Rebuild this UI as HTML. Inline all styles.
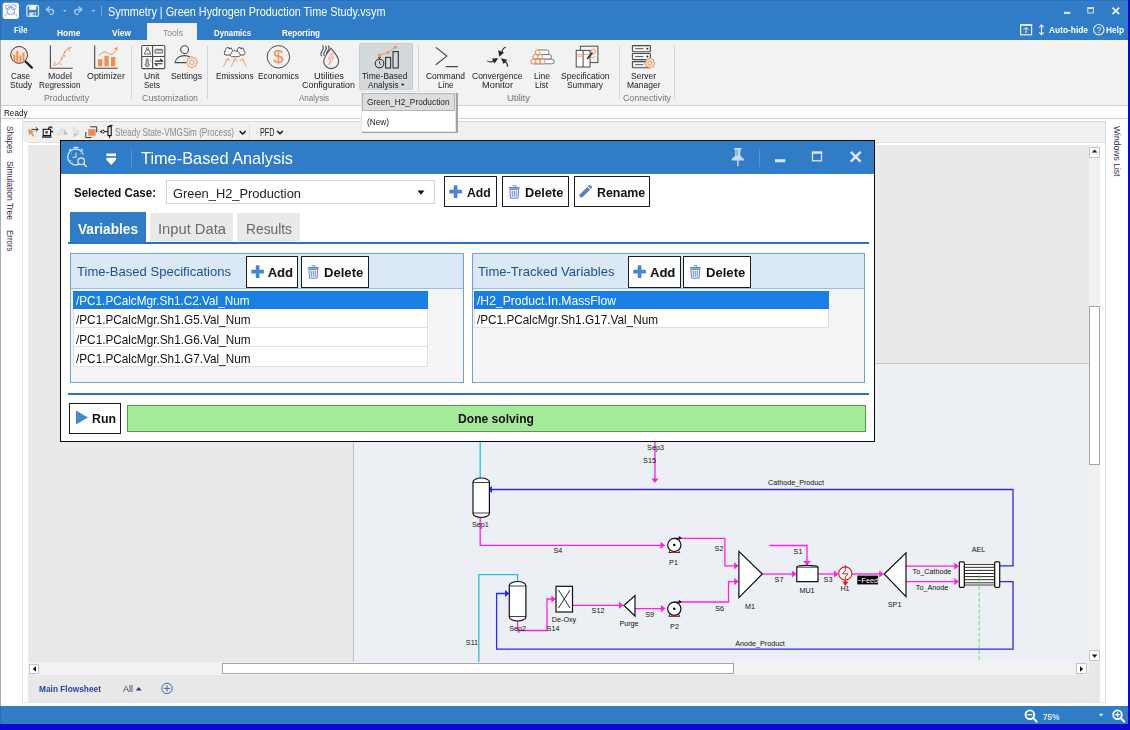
<!DOCTYPE html>
<html lang="en"><head><meta charset="utf-8"><title>Symmetry | Green Hydrogen Production Time Study.vsym</title>
<style>
html,body{margin:0;padding:0;}
body{width:1130px;height:730px;position:relative;overflow:hidden;background:#fff;font-family:'Liberation Sans', sans-serif;}
.b{position:absolute;box-sizing:border-box;display:block;}
.t{position:absolute;white-space:nowrap;line-height:1;transform-origin:0 50%;}
svg text{font-family:'Liberation Sans', sans-serif;}
</style></head>
<body>
<div class="b" style="left:0px;top:0px;width:1130px;height:730px;background:#ffffff;"></div>
<div class="b" style="left:0px;top:0px;width:1128px;height:40px;background:#307cc7;"></div>
<div class="b" style="left:0px;top:0px;width:1128px;height:1px;background:#2b70b8;"></div>
<div class="b" style="left:0px;top:40px;width:1128px;height:66px;background:#f2f2f2;"></div>
<div class="b" style="left:0px;top:104.8px;width:1128px;height:1px;background:#cdd2d8;"></div>
<div class="b" style="left:0px;top:106px;width:1128px;height:12px;background:#ffffff;"></div>
<div class="b" style="left:0px;top:117.7px;width:1128px;height:1px;background:#cdd2d9;"></div>
<div class="b" style="left:147px;top:22.6px;width:50px;height:17.4px;background:#f2f2f2;"></div>
<span class="t" style="left:14.00px;top:25.01px;font-size:9.6px;color:#fff;font-weight:700;transform:scaleX(0.8166);">File</span>
<span class="t" style="left:57.00px;top:27.81px;font-size:9.6px;color:#fff;font-weight:700;transform:scaleX(0.8816);">Home</span>
<span class="t" style="left:112.00px;top:27.81px;font-size:9.6px;color:#fff;font-weight:700;transform:scaleX(0.8754);">View</span>
<span class="t" style="left:162.50px;top:27.81px;font-size:9.6px;color:#7f8aa3;transform:scaleX(0.8926);">Tools</span>
<span class="t" style="left:214.00px;top:27.81px;font-size:9.6px;color:#fff;font-weight:700;transform:scaleX(0.8163);">Dynamics</span>
<span class="t" style="left:282.00px;top:27.81px;font-size:9.6px;color:#fff;font-weight:700;transform:scaleX(0.8386);">Reporting</span>
<span class="t" style="left:107.50px;top:6.04px;font-size:12.4px;color:#fff;transform:scaleX(0.8754);">Symmetry | Green Hydrogen Production Time Study.vsym</span>
<span class="t" style="left:1049.00px;top:24.81px;font-size:9.6px;color:#fff;font-weight:700;transform:scaleX(0.8712);">Auto-hide</span>
<span class="t" style="left:1106.00px;top:24.81px;font-size:9.6px;color:#fff;font-weight:700;transform:scaleX(0.8655);">Help</span>
<svg class="b" style="left:0px;top:0px;" width="1128" height="40" viewBox="0 0 1128 40"><rect x="2.7" y="2.7" width="16.2" height="16.2" rx="2.6" fill="#fff"/><g fill="none" stroke="#8d99cf" stroke-width="0.9"><circle cx="7.7" cy="7.4" r="2.3"/><circle cx="13.6" cy="7.2" r="2.5"/><circle cx="10.7" cy="10.8" r="3.9"/><path d="M5 15.9c0.4 -2.3 2.3 -3.3 4 -2.6M16.5 15.9c-0.4 -2.3 -2.3 -3.3 -4 -2.6"/></g><rect x="26.9" y="5.5" width="11.6" height="10.8" rx="1.6" fill="none" stroke="#d3e4f8" stroke-width="1.3"/><rect x="29.2" y="5.5" width="7" height="4.3" fill="#fff"/><rect x="29.4" y="12.4" width="6.6" height="3.6" fill="#d3e4f8"/><rect x="33.2" y="13.4" width="2" height="1.8" fill="#307cc7"/><path d="M49.8 6.6L46.3 9.5L49.8 12.4M46.6 9.5H51.2A2.4 2.4 0 0 1 51.2 14.3H49.6" fill="none" stroke="#a9cbf0" stroke-width="1.3"/><path d="M78.4 6.6L81.9 9.5L78.4 12.4M81.6 9.5H77A2.4 2.4 0 0 0 77 14.3H78.6" fill="none" stroke="#a9cbf0" stroke-width="1.3"/><path d="M63 10h3.4l-1.7 2z M91.8 10h3.4l-1.7 2z" fill="#a9cbf0"/><rect x="101" y="5.8" width="1" height="10.4" fill="#6ea4dc"/><rect x="1064" y="11.8" width="6.4" height="2.2" fill="#d3e4f8"/><rect x="1087.8" y="7.8" width="5.6" height="5.2" fill="none" stroke="#d3e4f8" stroke-width="1"/><rect x="1087.3" y="7.2" width="6.6" height="1.8" fill="#d3e4f8"/><path d="M1112.5 7.6l6.6 6.6M1119.1 7.6l-6.6 6.6" stroke="#f0f6fd" stroke-width="1.7"/><rect x="1020.6" y="25" width="11" height="9.8" fill="none" stroke="#eaf2fc" stroke-width="1.2"/><rect x="1020" y="24.2" width="12.2" height="1.6" fill="#eaf2fc"/><path d="M1026.1 33v-5.4M1023.6 29.8l2.5 -2.5l2.5 2.5" fill="none" stroke="#eaf2fc" stroke-width="1"/><path d="M1041.5 25v9.6M1039.3 27.3l2.2 -2.4l2.2 2.4M1039.3 32.3l2.2 2.4l2.2 -2.4" fill="none" stroke="#eaf2fc" stroke-width="1.1"/><circle cx="1098.8" cy="29.7" r="5.2" fill="none" stroke="#eaf2fc" stroke-width="1.1"/><text x="1098.8" y="32.7" font-size="8.4" text-anchor="middle" fill="#eaf2fc">?</text></svg>
<div class="b" style="left:359px;top:43.2px;width:54.4px;height:46.6px;background:#d4d9dc;border:1px solid #c6cdd2;border-radius:2px;"></div>
<span class="t" style="left:11.00px;top:71.31px;font-size:9.4px;color:#222;transform:scaleX(0.8680);">Case</span>
<span class="t" style="left:9.50px;top:80.31px;font-size:9.4px;color:#222;transform:scaleX(0.9173);">Study</span>
<span class="t" style="left:48.00px;top:71.31px;font-size:9.4px;color:#222;transform:scaleX(0.9394);">Model</span>
<span class="t" style="left:39.25px;top:80.31px;font-size:9.4px;color:#222;transform:scaleX(0.8751);">Regression</span>
<span class="t" style="left:87.00px;top:71.31px;font-size:9.4px;color:#222;transform:scaleX(0.9474);">Optimizer</span>
<span class="t" style="left:144.25px;top:71.31px;font-size:9.4px;color:#222;transform:scaleX(0.9297);">Unit</span>
<span class="t" style="left:144.00px;top:80.31px;font-size:9.4px;color:#222;transform:scaleX(0.8526);">Sets</span>
<span class="t" style="left:170.50px;top:71.31px;font-size:9.4px;color:#222;transform:scaleX(0.9151);">Settings</span>
<span class="t" style="left:216.25px;top:71.31px;font-size:9.4px;color:#222;transform:scaleX(0.8778);">Emissions</span>
<span class="t" style="left:257.50px;top:71.31px;font-size:9.4px;color:#222;transform:scaleX(0.8940);">Economics</span>
<span class="t" style="left:313.50px;top:71.31px;font-size:9.4px;color:#222;transform:scaleX(0.9928);">Utilities</span>
<span class="t" style="left:302.00px;top:80.31px;font-size:9.4px;color:#222;transform:scaleX(0.9504);">Configuration</span>
<span class="t" style="left:362.25px;top:71.41px;font-size:9.4px;color:#222;transform:scaleX(0.9063);">Time-Based</span>
<span class="t" style="left:367.75px;top:80.31px;font-size:9.4px;color:#222;transform:scaleX(0.8734);">Analysis</span>
<span class="t" style="left:426.30px;top:71.31px;font-size:9.4px;color:#222;transform:scaleX(0.9017);">Command</span>
<span class="t" style="left:438.05px;top:80.31px;font-size:9.4px;color:#222;transform:scaleX(0.8740);">Line</span>
<span class="t" style="left:472.25px;top:71.31px;font-size:9.4px;color:#222;transform:scaleX(0.9056);">Convergence</span>
<span class="t" style="left:482.00px;top:80.31px;font-size:9.4px;color:#222;transform:scaleX(0.9915);">Monitor</span>
<span class="t" style="left:533.50px;top:71.31px;font-size:9.4px;color:#222;transform:scaleX(0.9022);">Line</span>
<span class="t" style="left:535.00px;top:80.31px;font-size:9.4px;color:#222;transform:scaleX(0.8908);">List</span>
<span class="t" style="left:560.75px;top:71.31px;font-size:9.4px;color:#222;transform:scaleX(0.9124);">Specification</span>
<span class="t" style="left:567.00px;top:80.31px;font-size:9.4px;color:#222;transform:scaleX(0.8975);">Summary</span>
<span class="t" style="left:631.00px;top:71.31px;font-size:9.4px;color:#222;transform:scaleX(0.9050);">Server</span>
<span class="t" style="left:626.75px;top:80.31px;font-size:9.4px;color:#222;transform:scaleX(0.9050);">Manager</span>
<span class="t" style="left:43.50px;top:93.41px;font-size:9.4px;color:#70757b;transform:scaleX(0.9284);">Productivity</span>
<span class="t" style="left:142.00px;top:93.41px;font-size:9.4px;color:#70757b;transform:scaleX(0.9427);">Customization</span>
<span class="t" style="left:298.50px;top:93.41px;font-size:9.4px;color:#70757b;transform:scaleX(0.8591);">Analysis</span>
<span class="t" style="left:507.00px;top:93.41px;font-size:9.4px;color:#70757b;">Utility</span>
<span class="t" style="left:623.00px;top:93.41px;font-size:9.4px;color:#70757b;transform:scaleX(0.9397);">Connectivity</span>
<div class="b" style="left:131px;top:46px;width:1px;height:53px;background:#d0d4d9;"></div>
<div class="b" style="left:207px;top:46px;width:1px;height:53px;background:#d0d4d9;"></div>
<div class="b" style="left:417.5px;top:46px;width:1px;height:53px;background:#d0d4d9;"></div>
<div class="b" style="left:618.5px;top:46px;width:1px;height:53px;background:#d0d4d9;"></div>
<div class="b" style="left:673.5px;top:46px;width:1px;height:53px;background:#d0d4d9;"></div>
<svg class="b" style="left:0px;top:40px;" width="1128" height="66" viewBox="0 40 1128 66"><path d="M25.5 61.5L31.8 67.6" stroke="#222" stroke-width="2.4" stroke-linecap="round"/><circle cx="19.1" cy="54.9" r="8.4" fill="#fce9df" stroke="#4a3328" stroke-width="1"/><rect x="13.4" y="54.5" width="1.9" height="6.799999999999997" fill="#f28c55"/><rect x="16.3" y="50.8" width="1.9" height="11.5" fill="#f28c55"/><rect x="19.5" y="55.5" width="1.9" height="6.799999999999997" fill="#f28c55"/><rect x="22.6" y="52.6" width="1.9" height="8.699999999999996" fill="#f28c55"/><path d="M50.4 45.4V68.3H72.8" fill="none" stroke="#4a4a4a" stroke-width="1.1"/><path d="M53 65.3C60 64.6 61.5 60 63 56C64.5 51.5 67 48.4 71.6 47.3" fill="none" stroke="#f28c55" stroke-width="1"/><circle cx="54.8" cy="62.8" r="0.85" fill="#f28c55"/><circle cx="60.9" cy="64" r="0.85" fill="#f28c55"/><circle cx="61.5" cy="58.2" r="0.85" fill="#f28c55"/><circle cx="64.6" cy="52" r="0.85" fill="#f28c55"/><circle cx="64.5" cy="55.8" r="0.85" fill="#f28c55"/><circle cx="69.3" cy="50.3" r="0.85" fill="#f28c55"/><circle cx="68.8" cy="48" r="0.85" fill="#f28c55"/><path d="M94.7 45.4V68.3H117.8" fill="none" stroke="#4a4a4a" stroke-width="1.1"/><rect x="98" y="59.3" width="4.3" height="7.1000000000000085" fill="#f28c55"/><rect x="104.4" y="55.8" width="4.3" height="10.600000000000009" fill="#f28c55"/><rect x="111" y="57" width="4.3" height="9.400000000000006" fill="#f28c55"/><path d="M99 55.5C102 52.5 104.5 51.3 106.5 52.2C108.8 53.3 110 55 112 54.2C114 53.4 115.5 50.8 116.6 48.6" fill="none" stroke="#f28c55" stroke-width="1"/><path d="M117.7 46.9l-3.6 1.4 2.9 2.2z" fill="#f28c55"/><rect x="141.7" y="45.5" width="23.1" height="23.1" rx="1.2" fill="#fafafa" stroke="#4a4a4a" stroke-width="1.1"/><path d="M152.6 45.5v23.1M141.7 56.5h23.1" stroke="#4a4a4a" stroke-width="1.1"/><circle cx="147.5" cy="48.7" r="1.1" fill="none" stroke="#4a4a4a" stroke-width="0.8"/><path d="M146 50.2c0.6 -0.5 2.4 -0.5 3 0l1.7 3.9h-6.4z" fill="none" stroke="#4a4a4a" stroke-width="0.8"/><rect x="155" y="49.3" width="7.6" height="3.8" rx="0.7" fill="#d8d8d8" stroke="#4a4a4a" stroke-width="0.8"/><path d="M157.4 49.3v1.6M159.1 49.3v1.6M160.8 49.3v1.6" stroke="#4a4a4a" stroke-width="0.5"/><path d="M146.2 59.6v3.4a2 2 0 1 0 2 0v-3.4a1 1 0 0 0 -2 0z" fill="#bbb" stroke="#4a4a4a" stroke-width="0.7"/><path d="M150.2 60.2h1.2M150.2 61.8h1.2" stroke="#4a4a4a" stroke-width="0.5"/><path d="M155.2 61.1h7.3l-2.2 -2.2M162.5 63.7h-7.3l2.2 2.2" fill="none" stroke="#222" stroke-width="1.15"/><circle cx="184.6" cy="49.7" r="3.9" fill="none" stroke="#4a4a4a" stroke-width="1.1"/><path d="M186.5 62.6H175.2C175.6 58.3 179.5 55.6 184.6 55.6C187 55.6 188.7 56.1 190 57" fill="none" stroke="#4a4a4a" stroke-width="1.1"/><polygon points="197.47,61.65 197.47,62.75 196.08,63.47 195.75,64.26 196.23,65.75 195.45,66.53 193.96,66.05 193.17,66.38 192.45,67.77 191.35,67.77 190.63,66.38 189.84,66.05 188.35,66.53 187.57,65.75 188.05,64.26 187.72,63.47 186.33,62.75 186.33,61.65 187.72,60.93 188.05,60.14 187.57,58.65 188.35,57.87 189.84,58.35 190.63,58.02 191.35,56.63 192.45,56.63 193.17,58.02 193.96,58.35 195.45,57.87 196.23,58.65 195.75,60.14 196.08,60.93" fill="#f2f2f2" stroke="#f28c55" stroke-width="1.0" stroke-linejoin="round"/><circle cx="191.9" cy="62.2" r="2.3" fill="#f2f2f2" stroke="#f28c55" stroke-width="1.0"/><path d="M2.8 8C0.2 8 -0.6 4.8 1.9 4C1.6 1 5.2 -0.6 7 1.7C9.2 0.2 11.6 2 10.9 4.3C13.2 4.8 12.8 8 10.2 8Z" transform="translate(223.9 47) scale(0.764 1.012)" fill="#f8f8f8" stroke="#4a4a4a" stroke-width="1.01" stroke-linejoin="round"/><path d="M2.8 8C0.2 8 -0.6 4.8 1.9 4C1.6 1 5.2 -0.6 7 1.7C9.2 0.2 11.6 2 10.9 4.3C13.2 4.8 12.8 8 10.2 8Z" transform="translate(235.8 47) scale(0.748 0.988)" fill="#f8f8f8" stroke="#4a4a4a" stroke-width="1.04" stroke-linejoin="round"/><path d="M2.8 8C0.2 8 -0.6 4.8 1.9 4C1.6 1 5.2 -0.6 7 1.7C9.2 0.2 11.6 2 10.9 4.3C13.2 4.8 12.8 8 10.2 8Z" transform="translate(230.1 50.1) scale(0.813 0.825)" fill="#ffffff" stroke="#4a4a4a" stroke-width="1.10" stroke-linejoin="round"/><path d="M223.4 66.7L227.8 58.4M225.3 60.8L227.8 58.4L229.5 61.4M231 66.9L235.2 58.4M232.9 61L235.2 58.4L237.3 61.4M246.3 66.7L242 58.6M239.8 61.2L242 58.6L244.4 60.8" fill="none" stroke="#f4996b" stroke-width="0.95" stroke-linejoin="round"/><circle cx="278.4" cy="56.8" r="11.2" fill="none" stroke="#4a4a4a" stroke-width="1"/><text x="278.4" y="63.4" font-size="18.5" text-anchor="middle" fill="#f28c55">$</text><path d="M322.5 45.7c1.6 2 1 3.5 -0.4 5.3c-1.5 1.9 -1.6 3.5 -0.3 5.3M325.4 45.7c1.6 2 1 3.5 -0.4 5.3c-1.5 1.9 -1.6 3.4 -0.6 5M328.3 45.7c1.6 2 0.8 3.6 -0.6 5.4c-1 1.3 -1.3 2.2 -1.2 3.2" fill="none" stroke="#4a4a4a" stroke-width="1.1"/><path d="M331.1 48.2C334.5 52.6 338.7 57 338.7 61.3A7.5 7.3 0 0 1 323.7 61.3C323.7 57 327.7 52.6 331.1 48.2z" fill="#f2f2f2" stroke="#4a4a4a" stroke-width="1.05"/><path d="M331.6 53.2l-3.3 5.6h2.6l-2.2 6l5.3 -7.4h-2.9l1.9 -4.2z" fill="none" stroke="#f28c55" stroke-width="0.7" stroke-linejoin="round"/><circle cx="379.5" cy="63.6" r="4.3" fill="none" stroke="#333" stroke-width="1.1"/><path d="M379.5 59.3v-1.7M378 57.4h3M379.5 63.6v-2.6M379.5 63.6l1.6 1.2" stroke="#333" stroke-width="0.9" fill="none"/><rect x="385.6" y="57.4" width="5" height="10.6" fill="none" stroke="#333" stroke-width="1.1"/><rect x="393" y="51.6" width="5.3" height="16.4" fill="none" stroke="#333" stroke-width="1.1"/><path d="M379.4 55L387.8 52.8L395.4 46.9" fill="none" stroke="#f28c55" stroke-width="0.9"/><circle cx="379.4" cy="55" r="1.5" fill="#f28c55"/><circle cx="387.8" cy="52.8" r="1.5" fill="#f28c55"/><circle cx="395.4" cy="46.9" r="1.5" fill="#f28c55"/><path d="M400.9 83.8h3.6l-1.8 2.2z" fill="#222"/><path d="M435.8 47.4L446.8 56.1L435.8 64.8M445.6 66.7H458" fill="none" stroke="#4a4a4a" stroke-width="1.2"/><path d="M502 51.8C502.5 49.2 503.6 47.7 505.7 47.2" fill="none" stroke="#262626" stroke-width="1.1"/><path d="M499.3 56.7L498.2 50.3L504 52.6z" fill="#262626"/><path d="M494 60.8C491.5 62.4 489.5 62.4 487.2 60.9" fill="none" stroke="#262626" stroke-width="1.1"/><path d="M498.2 58.2L492 58.4L494.5 63.5z" fill="#262626"/><path d="M505.3 61.6C507 63 507.9 64.6 507.6 66.8" fill="none" stroke="#262626" stroke-width="1.1"/><path d="M500.9 58.2L507.3 59.7L503.7 63.9z" fill="#262626"/><rect x="535.4" y="50" width="13.600000000000023" height="4.6" rx="2.3" fill="#fff" stroke="#6a6a6a" stroke-width="0.9"/><path d="M537.6999999999999 50H540.0M537.6999999999999 54.6H540.0" stroke="#f28c55" stroke-width="0.95"/><circle cx="537.6999999999999" cy="52.3" r="2.3" fill="#fff" stroke="#f28c55" stroke-width="0.95"/><rect x="533.1" y="54.6" width="18.399999999999977" height="4.6" rx="2.3" fill="#fff" stroke="#6a6a6a" stroke-width="0.9"/><path d="M535.4 54.6H542.3000000000001M535.4 59.2H542.3000000000001" stroke="#f28c55" stroke-width="0.95"/><circle cx="535.4" cy="56.9" r="2.3" fill="#fff" stroke="#f28c55" stroke-width="0.95"/><circle cx="540.0" cy="56.9" r="2.3" fill="#fff" stroke="#f28c55" stroke-width="0.95"/><rect x="531" y="59.2" width="23.200000000000045" height="4.6" rx="2.3" fill="#fff" stroke="#6a6a6a" stroke-width="0.9"/><path d="M533.3 59.2H544.8M533.3 63.800000000000004H544.8" stroke="#f28c55" stroke-width="0.95"/><circle cx="533.3" cy="61.5" r="2.3" fill="#fff" stroke="#f28c55" stroke-width="0.95"/><circle cx="537.9" cy="61.5" r="2.3" fill="#fff" stroke="#f28c55" stroke-width="0.95"/><circle cx="542.5" cy="61.5" r="2.3" fill="#fff" stroke="#f28c55" stroke-width="0.95"/><rect x="580.4" y="46.2" width="17.5" height="16.4" fill="#f2f2f2" stroke="#4a4a4a" stroke-width="1"/><circle cx="593.3" cy="51.4" r="2.3" fill="none" stroke="#f28c55" stroke-width="0.8"/><path d="M591 56.5c1.5 1.5 3.2 1.4 4.2 -0.6" fill="none" stroke="#f28c55" stroke-width="0.8"/><rect x="576.2" y="50.4" width="13.8" height="16.6" fill="#fff" stroke="#4a4a4a" stroke-width="1"/><path d="M583.1 50.4v16.6" stroke="#4a4a4a" stroke-width="1"/><path d="M576.7 54.6h6M576.7 56.2h6M583.6 54.6h6" stroke="#f28c55" stroke-width="0.8"/><path d="M587.2 57.6l4.6 -5.4l1.3 1.1l-4.6 5.4l-1.8 0.7z" fill="#333"/><rect x="632.4" y="45.6" width="18" height="6.1" rx="0.8" fill="#f2f2f2" stroke="#4a4a4a" stroke-width="1.1"/><path d="M635.2 48.65h8.2" stroke="#4a4a4a" stroke-width="0.9"/><rect x="632.4" y="53.5" width="18" height="6.1" rx="0.8" fill="#f2f2f2" stroke="#4a4a4a" stroke-width="1.1"/><path d="M635.2 56.55h8.2" stroke="#4a4a4a" stroke-width="0.9"/><rect x="632.4" y="61.6" width="18" height="6.1" rx="0.8" fill="#f2f2f2" stroke="#4a4a4a" stroke-width="1.1"/><path d="M635.2 64.65h8.2" stroke="#4a4a4a" stroke-width="0.9"/><circle cx="647.4" cy="48.65" r="0.95" fill="#222"/><circle cx="647.4" cy="56.55" r="0.95" fill="#222"/><polygon points="654.98,62.60 654.98,63.60 653.71,64.25 653.41,64.98 653.84,66.34 653.14,67.04 651.78,66.61 651.05,66.91 650.40,68.18 649.40,68.18 648.75,66.91 648.02,66.61 646.66,67.04 645.96,66.34 646.39,64.98 646.09,64.25 644.82,63.60 644.82,62.60 646.09,61.95 646.39,61.22 645.96,59.86 646.66,59.16 648.02,59.59 648.75,59.29 649.40,58.02 650.40,58.02 651.05,59.29 651.78,59.59 653.14,59.16 653.84,59.86 653.41,61.22 653.71,61.95" fill="#f2f2f2" stroke="#f28c55" stroke-width="1.0" stroke-linejoin="round"/><circle cx="649.9" cy="63.1" r="2.1" fill="#f2f2f2" stroke="#f28c55" stroke-width="1.0"/></svg>
<span class="t" style="left:4.00px;top:107.91px;font-size:9.4px;color:#111;transform:scaleX(0.8669);">Ready</span>
<div class="b" style="left:22px;top:119px;width:1px;height:584px;background:#dfe6ee;"></div>
<div class="b" style="left:22px;top:702px;width:1084px;height:1px;background:#dfe6ee;"></div>
<div class="b" style="left:1105px;top:121px;width:1px;height:582px;background:#d5dfea;"></div>
<div class="b" style="left:23px;top:121.6px;width:1082px;height:20.8px;background:#f0f0f0;"></div>
<div class="b" style="left:27.6px;top:141.6px;width:1077.6px;height:0.8px;background:#e0e0e0;"></div>
<div class="b" style="left:23px;top:120.8px;width:1082px;height:1px;background:#d3d8de;"></div>
<svg class="b" style="left:23px;top:120px;" width="300" height="24" viewBox="23 120 300 24"><path d="M28 129l6.4 2.4l-2.3 1.1l2.2 3.3l-1.3 0.9l-2.2 -3.3l-1.6 2z" fill="#f28c55"/><path d="M31.5 129.4h6.5M35.8 127.2l2.4 2.2l-2.4 2.2" fill="none" stroke="#222" stroke-width="0.9"/><rect x="43.2" y="129.3" width="7.4" height="6.2" fill="none" stroke="#111" stroke-width="1.1"/><path d="M42 137h9.6" stroke="#111" stroke-width="1.3"/><rect x="45.3" y="131" width="2.6" height="2.6" fill="#555"/><path d="M48.6 129.2v-1a1.9 1.9 0 0 1 3.6 0M50.6 131.6h2.6" fill="none" stroke="#111" stroke-width="1.1"/><path d="M61.6 128.3v6.4h-4.4z" fill="none" stroke="#d0d0d0" stroke-width="0.8"/><path d="M63.6 128.3v6.4h4.4z" fill="#c4c4c4"/><path d="M73.6 131.6v-4.2l6 4.2z" fill="none" stroke="#d0d0d0" stroke-width="0.8"/><path d="M73.6 133.2v4.2l6 -4.2z" fill="#c4c4c4"/><rect x="88.2" y="129.2" width="7.4" height="6.6" fill="#f28c55"/><path d="M90.4 126.8h6.3v5.6M91.4 137.6h-5.6v-5.6" fill="none" stroke="#333" stroke-width="1"/><circle cx="102.8" cy="131.6" r="1.5" fill="none" stroke="#111" stroke-width="0.9"/><path d="M99.8 131.6h1.5M104.3 131.6h3.6" stroke="#111" stroke-width="1"/><rect x="108" y="126.6" width="3.2" height="9" fill="none" stroke="#111" stroke-width="1.1"/><path d="M109.6 135.6v2.6M109.6 126.6v-1.2h3" fill="none" stroke="#111" stroke-width="1"/><path d="M239.6 131l3 3l3 -3M277.2 131l2.8 2.8l2.8 -2.8" fill="none" stroke="#111" stroke-width="1.4"/><rect x="249" y="124" width="1" height="18" fill="#dcdcdc"/></svg>
<span class="t" style="left:115.40px;top:127.92px;font-size:10px;color:#8a8a8a;transform:scaleX(0.8142);">Steady State-VMGSim (Process)</span>
<span class="t" style="left:259.60px;top:127.92px;font-size:10px;color:#222;transform:scaleX(0.7250);">PFD</span>
<span class="t" style="left:14.89px;top:125.50px;font-size:9.6px;color:#3b2d4f;transform-origin:0 0;transform:rotate(90deg) scaleX(0.8449);">Shapes</span>
<span class="t" style="left:14.89px;top:161.00px;font-size:9.6px;color:#3b2d4f;transform-origin:0 0;transform:rotate(90deg) scaleX(0.8851);">Simulation Tree</span>
<span class="t" style="left:14.89px;top:229.60px;font-size:9.6px;color:#3b2d4f;transform-origin:0 0;transform:rotate(90deg) scaleX(0.8230);">Errors</span>
<span class="t" style="left:1121.79px;top:126.00px;font-size:9.6px;color:#3b2d4f;transform-origin:0 0;transform:rotate(90deg) scaleX(0.8936);">Windows List</span>
<div class="b" style="left:27.6px;top:144.6px;width:1061px;height:517.6px;background:#e9e9e9;"></div>
<div class="b" style="left:354px;top:364px;width:734.6px;height:298.2px;background:#ecf0f4;"></div>
<div class="b" style="left:353px;top:364px;width:1px;height:298.2px;background:#bcc0c6;"></div>
<div class="b" style="left:353px;top:363.4px;width:735.6px;height:1px;background:#c4c8cd;"></div>
<div class="b" style="left:1088.6px;top:144.6px;width:11.6px;height:517.6px;background:#f1f1f1;"></div>
<div class="b" style="left:27.6px;top:662.2px;width:1061px;height:12.4px;background:#f2f2f2;"></div>
<div class="b" style="left:1088.6px;top:662.2px;width:11.6px;height:12.6px;background:#e8e8e8;"></div>
<div class="b" style="left:1089.2px;top:305.6px;width:10.6px;height:159.2px;background:#ffffff;border:1px solid #a6a6a6;"></div>
<div class="b" style="left:222.3px;top:663.3px;width:511.5px;height:10.5px;background:#ffffff;border:1px solid #a6a6a6;"></div>
<div class="b" style="left:1089.2px;top:146.5px;width:10.5px;height:11px;background:#ffffff;border:1px solid #c4c4c4;"></div>
<div class="b" style="left:1089.2px;top:650.4px;width:10.5px;height:10.4px;background:#ffffff;border:1px solid #c4c4c4;"></div>
<div class="b" style="left:28.8px;top:663.6px;width:10.4px;height:10.4px;background:#ffffff;border:1px solid #c4c4c4;"></div>
<div class="b" style="left:1076.2px;top:663.4px;width:10.4px;height:10.4px;background:#ffffff;border:1px solid #c4c4c4;"></div>
<div class="b" style="left:27.6px;top:674.5px;width:1072.6px;height:27.3px;background:#e8e8e8;"></div>
<span class="t" style="left:38.70px;top:683.81px;font-size:9.4px;color:#27479a;font-weight:700;transform:scaleX(0.8881);">Main Flowsheet</span>
<span class="t" style="left:122.80px;top:683.81px;font-size:9.4px;color:#444;transform:scaleX(0.9595);">All</span>
<svg class="b" style="left:28px;top:144px;" width="1060" height="519" viewBox="28 144 1060 519"><polyline points="480.2,441 480.2,478" fill="none" stroke="#22c3d6" stroke-width="1.3" /><polyline points="478.8,662 478.8,574.7 517.6,574.7 517.6,582" fill="none" stroke="#22c3d6" stroke-width="1.3" /><polyline points="655,441 655,480" fill="none" stroke="#ff1fe8" stroke-width="1.3" /><path d="M655 483l-3.6 -4.5h7.2z" fill="#ff1fe8"/><polyline points="1000,565.9 1013,565.9 1013,489.5 490,489.5" fill="none" stroke="#2a2ae0" stroke-width="1.3" /><path d="M487.5 489.5l4.5 -3.6v7.2z" fill="#2a2ae0"/><polyline points="1000,581.6 1013,581.6 1013,649.2 496.6,649.2 496.6,593.5 506,593.5" fill="none" stroke="#2a2ae0" stroke-width="1.3" /><path d="M509.5 593.5l-4.5 -3.6v7.2z" fill="#2a2ae0"/><polyline points="480.2,517 480.2,545.3 661,545.3" fill="none" stroke="#ff1fe8" stroke-width="1.3" /><path d="M665 545.3l-4.5 -3.6v7.2z" fill="#ff1fe8"/><polyline points="679,538.3 724.9,538.3 724.9,565.8 735,565.8" fill="none" stroke="#ff1fe8" stroke-width="1.3" /><path d="M738.7 565.8l-4.5 -3.6v7.2z" fill="#ff1fe8"/><polyline points="679,602 728.5,602 728.5,581.6 735,581.6" fill="none" stroke="#ff1fe8" stroke-width="1.3" /><path d="M738.7 581.6l-4.5 -3.6v7.2z" fill="#ff1fe8"/><polyline points="517.6,621 517.6,630.5 547,630.5 547,599 552,599" fill="none" stroke="#ff1fe8" stroke-width="1.3" /><path d="M555.8 599l-4.5 -3.6v7.2z" fill="#ff1fe8"/><polyline points="572.5,605.3 620,605.3" fill="none" stroke="#ff1fe8" stroke-width="1.3" /><path d="M623.5 605.3l-4.5 -3.6v7.2z" fill="#ff1fe8"/><polyline points="635,608.6 662,608.6" fill="none" stroke="#ff1fe8" stroke-width="1.3" /><path d="M665.5 608.6l-4.5 -3.6v7.2z" fill="#ff1fe8"/><polyline points="762.4,574 793,574" fill="none" stroke="#ff1fe8" stroke-width="1.3" /><path d="M796.6 574l-4.5 -3.6v7.2z" fill="#ff1fe8"/><polyline points="769.6,545.5 807,545.5 807,562" fill="none" stroke="#ff1fe8" stroke-width="1.3" /><path d="M807 565.5l-3.6 -4.5h7.2z" fill="#ff1fe8"/><polyline points="818,574 835,574" fill="none" stroke="#ff1fe8" stroke-width="1.3" /><path d="M838.5 574l-4.5 -3.6v7.2z" fill="#ff1fe8"/><polyline points="852,574 880,574" fill="none" stroke="#ff1fe8" stroke-width="1.4" /><path d="M883.7 574l-4.5 -3.6v7.2z" fill="#ff1fe8"/><polyline points="906,566.2 955,566.2" fill="none" stroke="#ff1fe8" stroke-width="1.3" /><path d="M958.8 566.2l-4.5 -3.6v7.2z" fill="#ff1fe8"/><polyline points="906,581.6 955,581.6" fill="none" stroke="#ff1fe8" stroke-width="1.3" /><path d="M958.8 581.6l-4.5 -3.6v7.2z" fill="#ff1fe8"/><path d="M473 482a8.2 4 0 0 1 16.4 0v31.5a8.2 4 0 0 1 -16.4 0z" fill="#fff" stroke="#111" stroke-width="1.2"/><path d="M473 482.5h16.4M473 513.0h16.4" stroke="#111" stroke-width="0.8"/><path d="M509.3 585.5a8.3 4 0 0 1 16.6 0v31.5a8.3 4 0 0 1 -16.6 0z" fill="#fff" stroke="#111" stroke-width="1.2"/><path d="M509.3 586.0h16.6M509.3 616.5h16.6" stroke="#111" stroke-width="0.8"/><rect x="556" y="586.3" width="16.5" height="25.7" fill="#fff" stroke="#111" stroke-width="1.2"/><path d="M558.5 590l11.5 18M570 590l-11.5 18" stroke="#111" stroke-width="0.9"/><path d="M624 605.5L635 595.5V616z" fill="#fff" stroke="#111" stroke-width="1.2"/><path d="M668.8 552.5l2 -3h7l2 3z" fill="#fff" stroke="#111" stroke-width="0.9"/><circle cx="674.3" cy="545" r="6.6" fill="#fff" stroke="#111" stroke-width="1.2"/><path d="M674.3 538.4h6.5" stroke="#111" stroke-width="1.2"/><circle cx="674.3" cy="545" r="1.3" fill="#111"/><path d="M681.8 538l-3 -2v4z" fill="#111"/><path d="M671.3 552.3h6" stroke="#e02020" stroke-width="1"/><path d="M668.8 616.3l2 -3h7l2 3z" fill="#fff" stroke="#111" stroke-width="0.9"/><circle cx="674.3" cy="608.8" r="6.6" fill="#fff" stroke="#111" stroke-width="1.2"/><path d="M674.3 602.1999999999999h6.5" stroke="#111" stroke-width="1.2"/><circle cx="674.3" cy="608.8" r="1.3" fill="#111"/><path d="M681.8 601.8l-3 -2v4z" fill="#111"/><path d="M671.3 616.0999999999999h6" stroke="#e02020" stroke-width="1"/><path d="M738.9 551.3V597.6L762.3 574z" fill="#fff" stroke="#111" stroke-width="1.2"/><path d="M796.8 567a10.6 1.6 0 0 1 21.2 0V581.6H796.8z" fill="#fff" stroke="#111" stroke-width="1.2"/><path d="M796.8 567.2h21.2" stroke="#111" stroke-width="0.8"/><circle cx="845.3" cy="573.5" r="6.6" fill="#fff" stroke="#e01818" stroke-width="1.1"/><path d="M845.3 565v5.5l-2.8 3.3h5.6l-2.8 3.3v5.5" fill="none" stroke="#e01818" stroke-width="1"/><path d="M845.3 586l-3 -4.5h6z" fill="#e01818"/><path d="M884.2 574L906 552.8V596.6z" fill="#fff" stroke="#111" stroke-width="1.2"/><rect x="964.5" y="564.5" width="30" height="20.5" fill="#fff" stroke="#111" stroke-width="0.8"/><path d="M964.5 567.3h30" stroke="#111" stroke-width="0.9"/><path d="M964.5 570.4h30" stroke="#111" stroke-width="0.9"/><path d="M964.5 573.5h30" stroke="#111" stroke-width="0.9"/><path d="M964.5 576.5999999999999h30" stroke="#111" stroke-width="0.9"/><path d="M964.5 579.6999999999999h30" stroke="#111" stroke-width="0.9"/><path d="M964.5 582.8h30" stroke="#111" stroke-width="0.9"/><rect x="959.3" y="561.8" width="5" height="25.5" rx="1" fill="#fff" stroke="#111" stroke-width="1.2"/><rect x="994.7" y="561.8" width="5" height="25.5" rx="1" fill="#fff" stroke="#111" stroke-width="1.2"/><polyline points="979.2,575 979.2,662" fill="none" stroke="#3bd646" stroke-width="0.75" stroke-dasharray="3.6 2.2"/><rect x="857.3" y="575.6" width="20.8" height="8.8" fill="#000"/><text x="867.7" y="582.6" font-size="7.2" text-anchor="middle" fill="#fff">~Feed</text><text x="655.5" y="450.3" font-size="7.2" text-anchor="middle" fill="#111" >Sep3</text><text x="649.5" y="463.3" font-size="7.2" text-anchor="middle" fill="#111" >S15</text><text x="796" y="485.3" font-size="7.2" text-anchor="middle" fill="#111" >Cathode_Product</text><text x="480.3" y="526.5" font-size="7.2" text-anchor="middle" fill="#111" >Sep1</text><text x="557.8" y="553.3000000000001" font-size="7.2" text-anchor="middle" fill="#111" >S4</text><text x="673.5" y="564.7" font-size="7.2" text-anchor="middle" fill="#111" >P1</text><text x="719" y="550.8000000000001" font-size="7.2" text-anchor="middle" fill="#111" >S2</text><text x="750" y="608.7" font-size="7.2" text-anchor="middle" fill="#111" >M1</text><text x="798" y="553.8000000000001" font-size="7.2" text-anchor="middle" fill="#111" >S1</text><text x="779" y="582.3000000000001" font-size="7.2" text-anchor="middle" fill="#111" >S7</text><text x="807" y="593.0" font-size="7.2" text-anchor="middle" fill="#111" >MU1</text><text x="828" y="581.5" font-size="7.2" text-anchor="middle" fill="#111" >S3</text><text x="845" y="590.7" font-size="7.2" text-anchor="middle" fill="#111" >H1</text><text x="894.6" y="607.3000000000001" font-size="7.2" text-anchor="middle" fill="#111" >SP1</text><text x="978.5" y="552.3000000000001" font-size="7.2" text-anchor="middle" fill="#111" >AEL</text><text x="932" y="574.3000000000001" font-size="7.2" text-anchor="middle" fill="#111" >To_Cathode</text><text x="932" y="589.9000000000001" font-size="7.2" text-anchor="middle" fill="#111" >To_Anode</text><text x="517.6" y="631.1" font-size="7.2" text-anchor="middle" fill="#111" >Sep2</text><text x="553" y="631.1" font-size="7.2" text-anchor="middle" fill="#111" >S14</text><text x="564" y="622.3000000000001" font-size="7.2" text-anchor="middle" fill="#111" >De-Oxy</text><text x="598" y="613.3000000000001" font-size="7.2" text-anchor="middle" fill="#111" >S12</text><text x="629" y="626.3000000000001" font-size="7.2" text-anchor="middle" fill="#111" >Purge</text><text x="649.7" y="616.7" font-size="7.2" text-anchor="middle" fill="#111" >S9</text><text x="674.5" y="628.6" font-size="7.2" text-anchor="middle" fill="#111" >P2</text><text x="719.6" y="611.0" font-size="7.2" text-anchor="middle" fill="#111" >S6</text><text x="472" y="645.3000000000001" font-size="7.2" text-anchor="middle" fill="#111" >S11</text><text x="760" y="645.9000000000001" font-size="7.2" text-anchor="middle" fill="#111" >Anode_Product</text></svg>
<div class="b" style="left:60px;top:140px;width:815px;height:302px;background:#ffffff;border:1px solid #0a0a0a;"></div>
<div class="b" style="left:61px;top:141px;width:813px;height:33px;background:#307cc7;"></div>
<span class="t" style="left:141.00px;top:149.60px;font-size:17.2px;color:#fff;transform:scaleX(0.9509);">Time-Based Analysis</span>
<div class="b" style="left:131px;top:149px;width:1px;height:18px;background:#5a97d4;"></div>
<div class="b" style="left:759px;top:149px;width:1px;height:18px;background:#5a97d4;"></div>
<span class="t" style="left:73.50px;top:186.84px;font-size:12.6px;color:#111;font-weight:700;transform:scaleX(0.9151);">Selected Case:</span>
<div class="b" style="left:166px;top:180px;width:269px;height:24px;background:#fff;border:1px solid #d5d5d5;"></div>
<span class="t" style="left:172.50px;top:186.65px;font-size:13px;color:#222;transform:scaleX(0.9895);">Green_H2_Production</span>
<svg class="b" style="left:416px;top:189px;" width="10" height="7" viewBox="0 0 10 7"><path d="M1.5 1.5h7l-3.5 4.2z" fill="#111"/></svg>
<div class="b" style="left:443.8px;top:176.3px;width:53.2px;height:30.5px;background:#fff;border:1.5px solid #1c1c1c;"></div>
<svg class="b" style="left:449.2px;top:184.95000000000002px;" width="13.2" height="13.2" viewBox="0 0 13.2 13.2"><path d="M4.8 0.3h3.6v4.5h4.5v3.6h-4.5v4.5h-3.6v-4.5h-4.5v-3.6h4.5z" fill="#4a84cc"/></svg>
<span class="t" style="left:467.30px;top:185.50px;font-size:13px;color:#111;font-weight:700;transform:scaleX(0.9414);">Add</span>
<div class="b" style="left:502px;top:176.3px;width:67px;height:30.5px;background:#fff;border:1.5px solid #1c1c1c;"></div>
<svg class="b" style="left:508px;top:184.55px;" width="12.6" height="14" viewBox="0 0 12.6 14"><path d="M4.6 0.8h3.4v1.4" fill="none" stroke="#6685d4" stroke-width="1"/><rect x="0.8" y="1.9" width="11" height="1.9" rx="0.5" fill="#6685d4"/><path d="M1.9 4.6h8.8l-0.6 8.6h-7.6z" fill="#eef2fc" stroke="#6685d4" stroke-width="1"/><path d="M4.3 6v5.8M6.3 6v5.8M8.3 6v5.8" stroke="#6685d4" stroke-width="0.9"/></svg>
<span class="t" style="left:524.70px;top:185.50px;font-size:13px;color:#111;font-weight:700;transform:scaleX(0.9838);">Delete</span>
<div class="b" style="left:574px;top:176.3px;width:76.2px;height:30.5px;background:#fff;border:1.5px solid #1c1c1c;"></div>
<svg class="b" style="left:578.4px;top:184.55px;" width="15" height="14" viewBox="0 0 15 14"><path d="M1 13l0.9 -3.7l7.4 -7.4l2.8 2.8l-7.4 7.4z" fill="#5b7fcb"/><path d="M10 1.2l1.1 -1a1 1 0 0 1 1.3 0l1.5 1.5a1 1 0 0 1 0 1.3l-1.1 1.1z" fill="#5b7fcb"/><path d="M1 13l0.5 -2l1.5 1.5z" fill="#fff"/></svg>
<span class="t" style="left:596.70px;top:185.50px;font-size:13px;color:#111;font-weight:700;transform:scaleX(0.9530);">Rename</span>
<div class="b" style="left:70px;top:212px;width:75.5px;height:31px;background:#307cc7;"></div>
<span class="t" style="left:78.00px;top:221.66px;font-size:14px;color:#fff;font-weight:700;transform:scaleX(0.9756);">Variables</span>
<div class="b" style="left:150px;top:213px;width:83px;height:28.2px;background:#e9e9e9;"></div>
<span class="t" style="left:157.50px;top:221.66px;font-size:14px;color:#6a6a6a;transform:scaleX(1.0525);">Input Data</span>
<div class="b" style="left:237px;top:213px;width:62.5px;height:28.2px;background:#e9e9e9;"></div>
<span class="t" style="left:245.50px;top:221.66px;font-size:14px;color:#6a6a6a;transform:scaleX(0.9853);">Results</span>
<div class="b" style="left:68px;top:242px;width:801px;height:2px;background:#2b74bd;"></div>
<div class="b" style="left:70.3px;top:253px;width:394.2px;height:130.3px;background:#f5f5f5;border:1px solid #6fa0d6;"></div>
<div class="b" style="left:71.3px;top:254px;width:392.2px;height:34.5px;background:#dbe8f6;"></div>
<div class="b" style="left:71.3px;top:288.2px;width:392.2px;height:1px;background:#9dbde0;"></div>
<span class="t" style="left:76.50px;top:265.36px;font-size:13.6px;color:#1d4f91;transform:scaleX(0.9599);">Time-Based Specifications</span>
<div class="b" style="left:245.7px;top:256px;width:52.5px;height:31.5px;background:#fff;border:1.5px solid #1c1c1c;"></div>
<svg class="b" style="left:251.1px;top:265.15px;" width="13.2" height="13.2" viewBox="0 0 13.2 13.2"><path d="M4.8 0.3h3.6v4.5h4.5v3.6h-4.5v4.5h-3.6v-4.5h-4.5v-3.6h4.5z" fill="#4a84cc"/></svg>
<span class="t" style="left:267.70px;top:265.70px;font-size:13px;color:#111;font-weight:700;">Add</span>
<div class="b" style="left:301px;top:256px;width:67.6px;height:31.5px;background:#fff;border:1.5px solid #1c1c1c;"></div>
<svg class="b" style="left:307px;top:264.75px;" width="12.6" height="14" viewBox="0 0 12.6 14"><path d="M4.6 0.8h3.4v1.4" fill="none" stroke="#6685d4" stroke-width="1"/><rect x="0.8" y="1.9" width="11" height="1.9" rx="0.5" fill="#6685d4"/><path d="M1.9 4.6h8.8l-0.6 8.6h-7.6z" fill="#eef2fc" stroke="#6685d4" stroke-width="1"/><path d="M4.3 6v5.8M6.3 6v5.8M8.3 6v5.8" stroke="#6685d4" stroke-width="0.9"/></svg>
<span class="t" style="left:323.50px;top:265.70px;font-size:13px;color:#111;font-weight:700;transform:scaleX(1.0069);">Delete</span>
<div class="b" style="left:72.5px;top:291.3px;width:355.2px;height:17.4px;background:#1a7fe4;"></div>
<span class="t" style="left:76.00px;top:295.14px;font-size:12.6px;color:#fff;transform:scaleX(0.9330);">/PC1.PCalcMgr.Sh1.C2.Val_Num</span>
<div class="b" style="left:72.5px;top:308.7px;width:355.2px;height:19.4px;background:#fff;border:1px solid #e0e0e0;border-top:none;"></div>
<span class="t" style="left:76.00px;top:314.39px;font-size:12.6px;color:#111;transform:scaleX(0.9349);">/PC1.PCalcMgr.Sh1.G5.Val_Num</span>
<div class="b" style="left:72.5px;top:328.0px;width:355.2px;height:19.4px;background:#fff;border:1px solid #e0e0e0;border-top:none;"></div>
<span class="t" style="left:76.00px;top:333.64px;font-size:12.6px;color:#111;transform:scaleX(0.9349);">/PC1.PCalcMgr.Sh1.G6.Val_Num</span>
<div class="b" style="left:72.5px;top:347.3px;width:355.2px;height:19.4px;background:#fff;border:1px solid #e0e0e0;border-top:none;"></div>
<span class="t" style="left:76.00px;top:352.89px;font-size:12.6px;color:#111;transform:scaleX(0.9349);">/PC1.PCalcMgr.Sh1.G7.Val_Num</span>
<div class="b" style="left:471.6px;top:253px;width:393.4px;height:130.3px;background:#f5f5f5;border:1px solid #6fa0d6;"></div>
<div class="b" style="left:472.6px;top:254px;width:391.4px;height:34.5px;background:#dbe8f6;"></div>
<div class="b" style="left:472.6px;top:288.2px;width:391.4px;height:1px;background:#9dbde0;"></div>
<span class="t" style="left:477.80px;top:265.36px;font-size:13.6px;color:#1d4f91;transform:scaleX(0.9594);">Time-Tracked Variables</span>
<div class="b" style="left:628px;top:256px;width:52.5px;height:31.5px;background:#fff;border:1.5px solid #1c1c1c;"></div>
<svg class="b" style="left:633.4px;top:265.15px;" width="13.2" height="13.2" viewBox="0 0 13.2 13.2"><path d="M4.8 0.3h3.6v4.5h4.5v3.6h-4.5v4.5h-3.6v-4.5h-4.5v-3.6h4.5z" fill="#4a84cc"/></svg>
<span class="t" style="left:650.00px;top:265.70px;font-size:13px;color:#111;font-weight:700;">Add</span>
<div class="b" style="left:683px;top:256px;width:67.6px;height:31.5px;background:#fff;border:1.5px solid #1c1c1c;"></div>
<svg class="b" style="left:689px;top:264.75px;" width="12.6" height="14" viewBox="0 0 12.6 14"><path d="M4.6 0.8h3.4v1.4" fill="none" stroke="#6685d4" stroke-width="1"/><rect x="0.8" y="1.9" width="11" height="1.9" rx="0.5" fill="#6685d4"/><path d="M1.9 4.6h8.8l-0.6 8.6h-7.6z" fill="#eef2fc" stroke="#6685d4" stroke-width="1"/><path d="M4.3 6v5.8M6.3 6v5.8M8.3 6v5.8" stroke="#6685d4" stroke-width="0.9"/></svg>
<span class="t" style="left:705.50px;top:265.70px;font-size:13px;color:#111;font-weight:700;transform:scaleX(1.0069);">Delete</span>
<div class="b" style="left:473.8px;top:291.3px;width:355px;height:17.4px;background:#1a7fe4;"></div>
<span class="t" style="left:477.30px;top:295.14px;font-size:12.6px;color:#fff;transform:scaleX(0.9640);">/H2_Product.In.MassFlow</span>
<div class="b" style="left:473.8px;top:308.7px;width:355px;height:19.4px;background:#fff;border:1px solid #e0e0e0;border-top:none;"></div>
<span class="t" style="left:477.30px;top:314.39px;font-size:12.6px;color:#111;transform:scaleX(0.9346);">/PC1.PCalcMgr.Sh1.G17.Val_Num</span>
<div class="b" style="left:68px;top:393px;width:801px;height:2px;background:#2b74bd;"></div>
<div class="b" style="left:69px;top:403px;width:52px;height:30.5px;background:#fff;border:1.5px solid #1c1c1c;"></div>
<svg class="b" style="left:75px;top:410px;" width="14" height="15" viewBox="0 0 14 15"><path d="M1 0.5L13 7.5L1 14.5z" fill="#4d86cf"/></svg>
<span class="t" style="left:91.50px;top:412.05px;font-size:13.2px;color:#111;font-weight:700;transform:scaleX(0.9360);">Run</span>
<div class="b" style="left:126.5px;top:405px;width:739px;height:26.5px;background:#a5ea9b;border:1px solid #4f9e47;"></div>
<span class="t" style="left:457.50px;top:412.84px;font-size:12.6px;color:#111;font-weight:700;transform:scaleX(0.9611);">Done solving</span>
<svg class="b" style="left:61px;top:141px;" width="813" height="33" viewBox="61 141 813 33"><path d="M79.2 164.2A8 8 0 1 1 83.4 154.6" fill="none" stroke="#cfe2f7" stroke-width="1.4"/><path d="M73.3 147.3h5.2M75.9 147.5v1.8M69 150.6l1.8 -1.6M82.8 150.6l-1.8 -1.6" stroke="#cfe2f7" stroke-width="1.3" fill="none"/><path d="M76 152.6v4.6h-3.6" stroke="#cfe2f7" stroke-width="1.1" fill="none"/><path d="M71.2 153.4l0.8 0.6M80.6 153.4l-0.8 0.6M70 160.6h1.2M72.6 162.6l0.6 -0.6" stroke="#cfe2f7" stroke-width="0.9"/><circle cx="81.2" cy="161.3" r="3.3" fill="#307cc7" stroke="#cfe2f7" stroke-width="1.4"/><path d="M83.7 163.9l3 3" stroke="#cfe2f7" stroke-width="1.5"/><rect x="106.4" y="153.5" width="9.6" height="2.6" fill="#fff"/><path d="M106.4 157.7h9.6v2l-4.8 5.2l-4.8 -5.2z" fill="#fff"/><path d="M734 148h7.6v1.6h-1.2v6.2l3.6 3.2v1.6h-12.4v-1.6l3.6 -3.2v-6.2h-1.2z" fill="#c3daf4"/><rect x="737.1" y="160" width="1.5" height="6.2" fill="#c3daf4"/><rect x="736.4" y="149.6" width="1.4" height="6" fill="#307cc7" opacity="0.55"/><rect x="775" y="159.2" width="10.2" height="3.1" fill="#d6e6f8"/><rect x="812.5" y="152.4" width="9" height="8.4" fill="none" stroke="#d6e6f8" stroke-width="1.3"/><rect x="811.8" y="151.4" width="10.4" height="2.4" fill="#d6e6f8"/><path d="M850.8 151.8l9.8 9.8M860.6 151.8l-9.8 9.8" stroke="#dbe9f9" stroke-width="2.5"/></svg>
<div class="b" style="left:362px;top:92.8px;width:95.6px;height:40.2px;background:#a3a3a3;filter:blur(0.6px);"></div>
<div class="b" style="left:360.6px;top:91.4px;width:95.6px;height:40.2px;background:#ffffff;border:1px solid #e4e4e4;"></div>
<div class="b" style="left:362.2px;top:93.3px;width:92.4px;height:17.3px;background:#dddddd;border:1px solid #b3b3b3;"></div>
<span class="t" style="left:366.80px;top:97.41px;font-size:9.4px;color:#222;transform:scaleX(0.8843);">Green_H2_Production</span>
<span class="t" style="left:366.80px;top:116.81px;font-size:9.4px;color:#222;transform:scaleX(0.8800);">(New)</span>
<div class="b" style="left:0px;top:706px;width:1128px;height:18px;background:#307cc7;"></div>
<span class="t" style="left:1042.90px;top:711.51px;font-size:9.6px;color:#dce9f8;font-weight:700;transform:scaleX(0.8592);">75%</span>
<svg class="b" style="left:0px;top:140px;pointer-events:none;" width="1128" height="584" viewBox="0 140 1128 584"><path d="M1091.8 152.6l2.8 -3.2l2.8 3.2z" fill="#111"/><path d="M1091.8 654.6l2.8 3.2l2.8 -3.2z" fill="#111"/><path d="M36 666.2l-3.2 2.8l3.2 2.8z" fill="#111"/><path d="M1080 666.2l3.2 2.8l-3.2 2.8z" fill="#111"/><path d="M135.8 690.4l2.9 -3.4l2.9 3.4z" fill="#1f3a8a"/><circle cx="167" cy="688.4" r="5.2" fill="none" stroke="#3b57a8" stroke-width="0.9"/><path d="M163.8 688.4h6.4M167 685.2v6.4" stroke="#3b57a8" stroke-width="0.9"/><circle cx="1029.9" cy="714.7" r="4.3" fill="none" stroke="#fff" stroke-width="1.9"/><path d="M1033.2 718.0l3.4 3.6" stroke="#fff" stroke-width="2.1" stroke-linecap="round"/><path d="M1027.6000000000001 714.7h4.6" stroke="#fff" stroke-width="1.3"/><circle cx="1117.5" cy="714.7" r="4.3" fill="none" stroke="#fff" stroke-width="1.9"/><path d="M1120.8 718.0l3.4 3.6" stroke="#fff" stroke-width="2.1" stroke-linecap="round"/><path d="M1115.2 714.7h4.6" stroke="#fff" stroke-width="1.3"/><path d="M1117.5 712.4000000000001v4.6" stroke="#fff" stroke-width="1.3"/><path d="M1098.9 713.8h4.6l-2.3 2.8z" fill="#e6f0fb"/></svg>
<div class="b" style="left:0px;top:40px;width:1px;height:666px;background:#a9adb3;"></div>
<div class="b" style="left:0px;top:0px;width:1px;height:40px;background:#2a6eb6;"></div>
<div class="b" style="left:0px;top:706px;width:1px;height:18px;background:#2a6eb6;"></div>
<div class="b" style="left:1128px;top:0px;width:2px;height:730px;background:#0a0ad0;"></div>
<div class="b" style="left:0px;top:724px;width:1130px;height:6px;background:#0a0ad0;"></div>
</body></html>
